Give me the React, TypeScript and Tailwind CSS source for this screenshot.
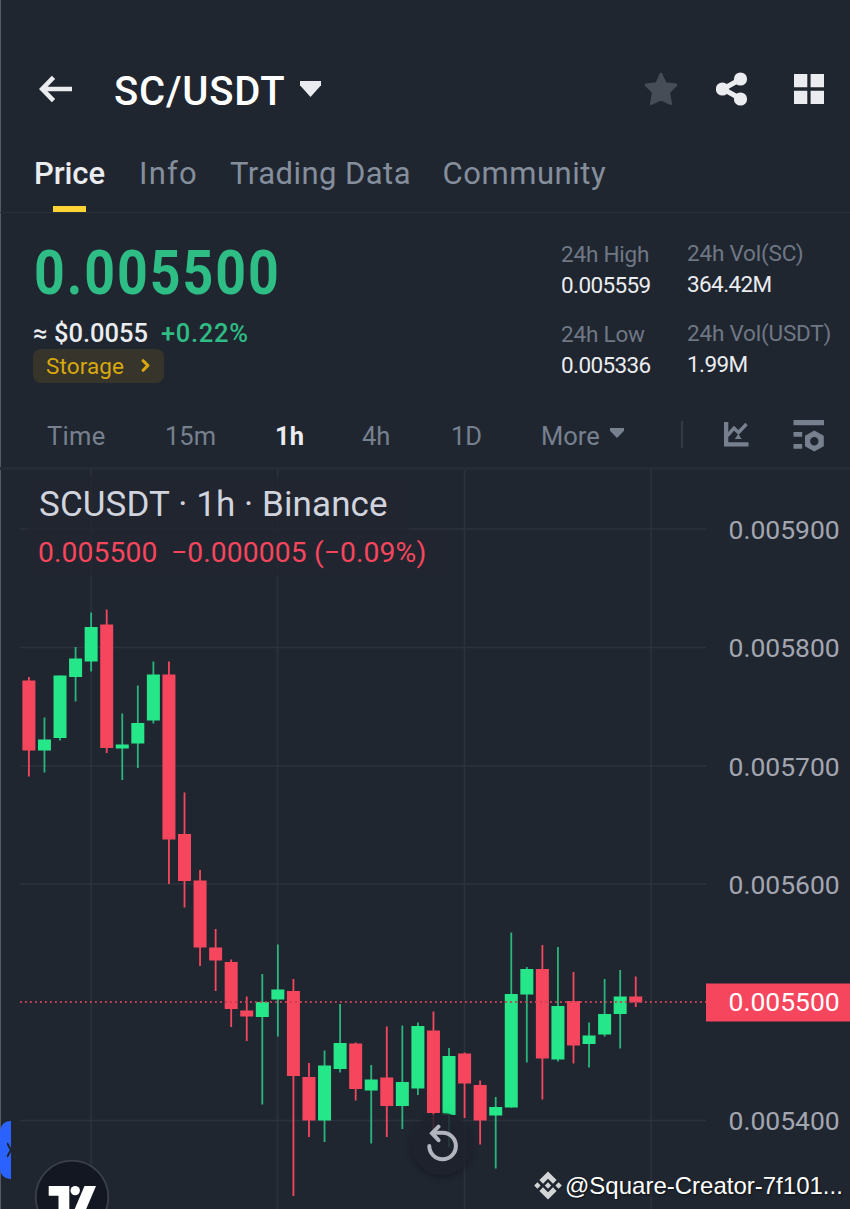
import { ChevronRight } from 'lucide-react';

interface Candle {
  up: boolean;
  high: number;
  top: number;
  bottom: number;
  low: number;
}

const UP = '#26e68a';
const UP_WICK = '#2ab57c';
const DOWN = '#f6465d';

const c = (up: boolean, high: number, top: number, bottom: number, low: number): Candle => ({ up, high, top, bottom, low });

const CANDLES: Candle[] = [
  c(false, 677, 680.5, 750.5, 776.5),
  c(true, 717.5, 739.5, 750.5, 772.5),
  c(true, 675.5, 675.5, 738, 740.5),
  c(true, 647, 658.5, 677, 701.5),
  c(true, 612.5, 627, 661.5, 671.5),
  c(false, 609.5, 624.5, 748, 753),
  c(true, 713.5, 744.5, 748.5, 780),
  c(true, 685.5, 723, 743.5, 768),
  c(true, 661.5, 674.5, 720.5, 723.5),
  c(false, 661.5, 674.5, 839.5, 884),
  c(false, 792.5, 834, 881, 907.5),
  c(false, 870, 880.5, 947.5, 966),
  c(false, 929, 947.5, 960.5, 991),
  c(false, 959.5, 962, 1009, 1027),
  c(false, 996.5, 1010.5, 1016.5, 1041),
  c(true, 974, 1002, 1017, 1104.5),
  c(true, 944.5, 989.5, 999.5, 1036.5),
  c(false, 979, 991, 1076, 1196),
  c(false, 1063, 1077, 1120.5, 1137),
  c(true, 1050.5, 1065.5, 1120.5, 1142),
  c(true, 1004, 1043, 1069, 1072.5),
  c(false, 1042.5, 1043.5, 1089, 1100.5),
  c(true, 1065, 1079.5, 1090.5, 1143.5),
  c(false, 1026.5, 1077.5, 1106, 1137),
  c(true, 1025.5, 1082, 1106, 1129),
  c(true, 1022.5, 1026, 1088.5, 1095),
  c(false, 1011.5, 1030.5, 1113, 1130),
  c(true, 1048, 1056, 1115, 1147.5),
  c(false, 1052.5, 1053.5, 1083.5, 1118),
  c(false, 1080.5, 1085, 1120.5, 1144.5),
  c(true, 1097, 1107, 1115.5, 1168.5),
  c(true, 932.5, 994, 1107.5, 1107.5),
  c(true, 967, 969, 994.5, 1062.5),
  c(false, 945, 969, 1058.5, 1099.5),
  c(true, 947, 1006, 1059.5, 1061.5),
  c(false, 972, 1001, 1045.5, 1063.5),
  c(true, 1022.5, 1035.5, 1044, 1067.5),
  c(true, 979, 1014, 1034.5, 1036.5),
  c(true, 970, 996.5, 1014, 1048.5),
  c(false, 976.5, 996.5, 1002.5, 1007),
];

const CHART_TOP = 470;

const AXIS = [
  { y: 529, label: '0.005900' },
  { y: 647.5, label: '0.005800' },
  { y: 766, label: '0.005700' },
  { y: 884, label: '0.005600' },
  { y: 1120.5, label: '0.005400' },
];

function BackArrow() {
  return (
    <svg width="34" height="28" viewBox="0 0 34 28" fill="none" stroke="#eaecef" strokeWidth="4.600">
      <path d="M33 14H4.500M14.500 2.400L3.200 14l11.300 11.600" />
    </svg>
  );
}

function StarIcon() {
  return (
    <svg width="34" height="34" viewBox="0 0 34 34" fill="#474d57" stroke="#474d57" strokeWidth="3" strokeLinejoin="round">
      <path d="M17 2.400l4.200 9.400 10.600 1.200-7.300 7.300 2 11.200L17 26.900l-9.500 4.600 2-11.200L2.200 13l10.600-1.200z" />
    </svg>
  );
}

function ShareIcon() {
  return (
    <svg width="32" height="34" viewBox="0 0 32 34" fill="#eaecef">
      <path d="M25 7L7 17l18 10" fill="none" stroke="#eaecef" strokeWidth="5" />
      <circle cx="24.500" cy="7" r="6.600" />
      <circle cx="6.400" cy="17" r="6.600" />
      <circle cx="24.500" cy="27" r="6.600" />
    </svg>
  );
}

function GridIcon() {
  return (
    <svg width="30" height="30" viewBox="0 0 30 30" fill="#eaecef">
      <path d="M0 0h13.300v13.300H0zM16.600 0H30v13.300H16.600zM0 16.700h13.300V30H0zM16.600 16.700H30V30H16.600z" />
    </svg>
  );
}

function Caret({ width, height, color }: { width: number; height: number; color: string }) {
  return (
    <svg width={width} height={height} viewBox="0 0 21 16" preserveAspectRatio="none" fill={color}>
      <path d="M0 0h21v4.200L10.500 16 0 4.200z" />
    </svg>
  );
}

function ChartIcon() {
  return (
    <svg width="25" height="25" viewBox="0 0 25 25" fill="#76808f">
      <path d="M0 0h4.300v20.200H24.500v4.300H0z" />
      <path d="M3.500 13.500l6.500-7.300 4.500 4.300 8-8.500" fill="none" stroke="#76808f" strokeWidth="3.400" />
      <path d="M14.300 12.300l2 2.200-.8 0 2.400 2.500h-7.400l2.500-2.500-.8 0z" />
    </svg>
  );
}

function SettingsIcon() {
  return (
    <svg width="31" height="32" viewBox="0 0 31 32" fill="#76808f">
      <path d="M.5 0h30.500v5.300H.5zM.5 12h8.700v4.800H.5zM.5 24h8.700v4.800H.5z" />
      <path fillRule="evenodd" d="M21.300 10.500l9.500 5.300v10.400l-9.500 5.300-9.300-5.300V15.800zM21.300 17a4.200 4.200 0 100 8.400 4.200 4.200 0 000-8.400z" />
    </svg>
  );
}

function Header() {
  return (
    <header className="flex h-[68px] items-center pl-[39px] pr-[26px]">
      <BackArrow />
      <h1 className="ml-[41px] pt-[5px] text-[40px] leading-[44px] font-medium tracking-[0.800px] text-white">SC/USDT</h1>
      <div className="ml-[15px]">
        <Caret width={21} height={16} color="#eaecef" />
      </div>
      <div className="ml-auto flex items-center">
        <StarIcon />
        <div className="ml-[38px]">
          <ShareIcon />
        </div>
        <div className="ml-[46px]">
          <GridIcon />
        </div>
      </div>
    </header>
  );
}

function Tabs() {
  return (
    <nav className="flex h-[90px] border-b border-[#2b313b] pl-[34px] pt-8 text-[31px] leading-[38px] font-normal text-[#848e9c]">
      <div className="flex w-[104px] flex-col">
        <span className="font-medium tracking-[-0.100px] text-[#eaecef]">Price</span>
        <span className="ml-[19px] mt-[13px] h-[7px] w-[33px] bg-[#fcd535]" />
      </div>
      <span className="w-[92px] pl-px tracking-[1.200px]">Info</span>
      <span className="w-[212.500px] tracking-[0.450px]">Trading Data</span>
      <span className="tracking-[0.550px]">Community</span>
    </nav>
  );
}

function Stat({ label, value }: { label: string; value: string }) {
  return (
    <div className="h-20">
      <p className="text-[22.500px] leading-[30px] tracking-[-0.200px] text-[#6f7785]">{label}</p>
      <p className="mt-px text-[22.500px] leading-[30px] tracking-[-0.600px] text-[#eaecef]">{value}</p>
    </div>
  );
}

function Summary() {
  return (
    <section className="flex h-[186px] pl-[33px]">
      <div className="w-[528px]">
        <p className="ml-px mt-[25px] w-fit origin-left scale-x-[0.880] text-[61px] leading-[70px] font-bold tracking-[2.200px] text-[#2ebd85]">0.005500</p>
        <p className="mt-[9px] flex text-[25.500px] leading-[32px] font-medium">
          <span className="w-[128px] text-[#eaecef]">≈ $0.0055</span>
          <span className="tracking-[0.700px] text-[#2ebd85]">+0.22%</span>
        </p>
        <div className="flex h-[34px] w-[131px] items-center rounded-lg bg-[#37342c] pl-[13px] pt-px text-[22.500px] text-[#d9a90b]">
          <span className="tracking-[0.100px]">Storage</span>
          <ChevronRight size={19} strokeWidth={4} className="ml-[12px] mb-0.5" />
        </div>
      </div>
      <div className="w-[126px] pt-[26px]">
        <Stat label="24h High" value="0.005559" />
        <Stat label="24h Low" value="0.005336" />
      </div>
      <div className="pt-[25px]">
        <Stat label="24h Vol(SC)" value="364.42M" />
        <Stat label="24h Vol(USDT)" value="1.99M" />
      </div>
    </section>
  );
}

function Intervals() {
  return (
    <div className="flex h-[71px] items-center border-b-[3px] border-[#262c37] pl-[47px] pt-[3px] text-[25.500px] text-[#76808f]">
      <span className="w-[118px] pt-[3px] tracking-[0.300px]">Time</span>
      <span className="w-[110px] pt-[3px]">15m</span>
      <span className="w-[87px] pt-[3px] font-bold text-[#eaecef]">1h</span>
      <span className="w-[89px] pt-[3px]">4h</span>
      <span className="w-[90px] pt-[3px]">1D</span>
      <span className="w-[69px] pt-[3px]">More</span>
      <div className="pb-[3px]">
        <Caret width={14} height={10} color="#76808f" />
      </div>
      <span className="ml-[57px] h-[27px] w-[2px] bg-[#343a45]" />
      <div className="ml-[41px]">
        <ChartIcon />
      </div>
      <div className="ml-[44px] pt-0.5">
        <SettingsIcon />
      </div>
    </div>
  );
}

function CandleChart() {
  return (
    <svg className="block" width="850" height="739" viewBox={`0 ${CHART_TOP} 850 739`} fontFamily="Roboto, sans-serif" fontSize="26.500">
      <g stroke="#2c323d" strokeWidth="1.600">
        {AXIS.map((a) => (
          <line key={a.label} x1="20" x2="706" y1={a.y} y2={a.y} />
        ))}
        {[91, 277.500, 464.500, 651].map((x) => (
          <line key={x} x1={x} x2={x} y1={CHART_TOP} y2="1209" />
        ))}
      </g>

      {/* backing of the two legend lines */}
      <path d="M28 476h381v56h36v44H28z" fill="#202630" fillOpacity="0.750" />

      {CANDLES.map((k, i) => {
        const x = 28.900 + i * 15.560;
        return (
          <g key={i}>
            <rect x={x - 0.900} y={k.high} width="1.800" height={k.low - k.high} fill={k.up ? UP_WICK : DOWN} />
            <rect x={x - 6.500} y={k.top} width="13" height={k.bottom - k.top} fill={k.up ? UP : DOWN} />
          </g>
        );
      })}

      <line x1="20" x2="706" y1="1002" y2="1002" stroke="#c93f54" strokeWidth="1.800" strokeDasharray="1.800 3.200" />

      {AXIS.map((a) => (
        <text key={a.label} x="728.500" y={a.y + 9.500} fill="#a3a6b1">{a.label}</text>
      ))}
      <rect x="706" y="983.500" width="144" height="38" fill={DOWN} />
      <text x="728.500" y="1011.400" fill="#fff">0.005500</text>
    </svg>
  );
}

function TradingViewBadge() {
  return (
    <svg className="absolute left-[34px] top-[689px]" width="76" height="50" viewBox="0 0 76 50">
      <circle cx="38" cy="38" r="36.300" fill="#131722" stroke="#3a3f4a" strokeWidth="1.800" />
      <path d="M14.700 27h20.600v23H24.500V36.700h-9.800z" fill="#fff" />
      <circle cx="41.200" cy="31.600" r="4.700" fill="#fff" />
      <path d="M50.500 27h11.500L52.200 50H40.700z" fill="#fff" />
    </svg>
  );
}

function ResetButton() {
  return (
    <div className="absolute left-[411px] top-[643px] flex h-[62px] w-[62px] items-center justify-center rounded-full bg-[#1f222d]/85 shadow-[0_3px_5px_rgba(15,18,26,0.5)]">
      <svg width="34" height="40" viewBox="0 0 34 40" fill="none" stroke="#b2b5be" strokeWidth="4" strokeLinecap="round">
        <path d="M4.300 22a13.300 13.300 0 1013.300-13.300H8" />
        <path d="M13.500 2.600L7 9.200l6.500 7" />
      </svg>
    </div>
  );
}

function Watermark() {
  return (
    <div className="absolute left-[533px] top-[701px] flex items-center whitespace-nowrap font-['Liberation_Sans',sans-serif] text-[24px] leading-[30px] text-white [text-shadow:1px_1px_2px_rgba(0,0,0,0.6)]">
      <svg width="30" height="30" viewBox="0 0 30 30" fill="#d3d4d6">
        <path d="M15 0.500l8.600 8.600-3.600 3.600-5-5-5 5-3.600-3.600z" />
        <path d="M15 28.500l8.600-8.600-3.600-3.600-5 5-5-5-3.600 3.600z" />
        <path d="M15 11.300l3.200 3.200-3.200 3.200-3.200-3.200zM4.400 11.300l3.200 3.200-3.200 3.200-3.200-3.200zM25.600 11.300l3.200 3.200-3.200 3.200-3.200-3.200z" />
      </svg>
      <span className="ml-[2px]">@Square-Creator-7f101...</span>
    </div>
  );
}

export default function App() {
  return (
    <main className="h-[1209px] w-[850px] overflow-hidden bg-[#202630] pt-[55px] font-[Roboto,sans-serif] shadow-[inset_1px_0_0_#555a64]">
      <Header />
      <Tabs />
      <Summary />
      <Intervals />
      <section className="relative">
        <CandleChart />
        <div className="absolute left-[38px] top-[13px] whitespace-nowrap">
          <p className="ml-px text-[35px] leading-[44px] tracking-[0.100px] text-[#d1d4dc]">SCUSDT · 1h · Binance</p>
          <p className="mt-[9px] flex text-[28.300px] leading-[34px] tracking-[0.100px] text-[#f6465d]">
            <span className="w-[133px]">0.005500</span>
            <span>−0.000005 (−0.09%)</span>
          </p>
        </div>
        <div className="absolute left-0 top-[651px] flex h-[58px] w-[11px] items-center justify-end overflow-hidden rounded-l-[10px] bg-[#2962ff]">
          <svg width="4" height="16" viewBox="0 0 4 16" fill="none" stroke="#1e222d" strokeWidth="2">
            <path d="M0 1l4 7-4 7" />
          </svg>
        </div>
        <TradingViewBadge />
        <ResetButton />
        <Watermark />
      </section>
    </main>
  );
}
